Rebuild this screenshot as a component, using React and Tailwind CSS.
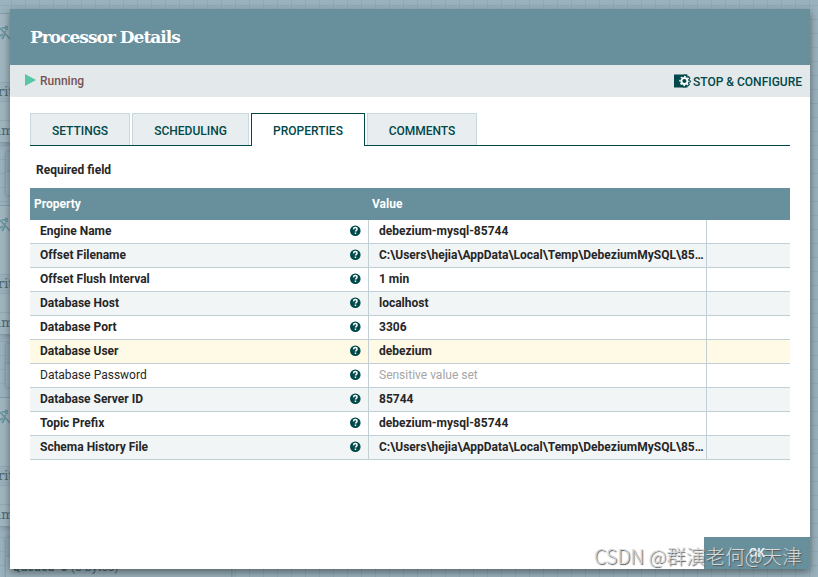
import { clsx } from "clsx";

const tabs = [
  { label: "SETTINGS", width: "w-[100px]" },
  { label: "SCHEDULING", width: "w-[117px]" },
  { label: "PROPERTIES", width: "w-[114px]", active: true },
  { label: "COMMENTS", width: "w-[110px]" },
];

const properties = [
  { name: "Engine Name", value: "debezium-mysql-85744", required: true },
  {
    name: "Offset Filename",
    value: "C:\\Users\\hejia\\AppData\\Local\\Temp\\DebeziumMySQL\\85…",
    required: true,
  },
  { name: "Offset Flush Interval", value: "1 min", required: true },
  { name: "Database Host", value: "localhost", required: true },
  { name: "Database Port", value: "3306", required: true },
  { name: "Database User", value: "debezium", required: true, hovered: true },
  { name: "Database Password", value: "Sensitive value set", sensitive: true },
  { name: "Database Server ID", value: "85744", required: true },
  { name: "Topic Prefix", value: "debezium-mysql-85744", required: true },
  {
    name: "Schema History File",
    value: "C:\\Users\\hejia\\AppData\\Local\\Temp\\DebeziumMySQL\\85…",
    required: true,
  },
];

const HelpIcon = () => (
  <svg viewBox="0 0 11 11" className="mb-[2px] h-[11px] w-[11px] shrink-0">
    <circle cx="5.3" cy="5.7" r="5.3" fill="#004849" />
    <path
      d="M3.5 4.4C3.6 3.1 4.3 2.6 5.3 2.6c1.1 0 1.8.6 1.8 1.5 0 1.2-1.6 1.2-1.6 2.5"
      fill="none"
      stroke="#fff"
      strokeWidth="1.5"
    />
    <rect x="4.7" y="7.5" width="1.5" height="1.5" fill="#fff" />
  </svg>
);

const StopConfigureIcon = () => (
  <svg viewBox="0 0 17 14" className="mb-px h-[14px] w-[17px]">
    <path d="M0 .5h13.5v13H0z" fill="#004849" />
    <circle cx="10.4" cy="7" r="5.6" fill="#004849" />
    <circle
      cx="10.4"
      cy="7"
      r="6"
      fill="none"
      stroke="#004849"
      strokeWidth="1.2"
      strokeDasharray="2.9 1.812"
      strokeDashoffset="1.45"
    />
    <circle cx="10.4" cy="7" r="3" fill="none" stroke="#fff" strokeWidth="1.9" />
    <circle
      cx="10.4"
      cy="7"
      r="4.5"
      fill="none"
      stroke="#fff"
      strokeWidth="1.4"
      strokeDasharray="1.7 1.834"
      strokeDashoffset="0.85"
    />
  </svg>
);

const CanvasProcessor = ({ className }) => (
  <div
    className={clsx(
      "absolute left-0 h-[130px] w-[240px] border-y border-[#829da8] bg-[#a0b6bf] text-[13px] text-[#4f686f] shadow-md",
      className
    )}
  >
    <svg viewBox="0 0 12 16" className="mt-[11px] h-4 w-3">
      <path
        d="M0 3l10 11"
        fill="none"
        stroke="#66909d"
        strokeWidth="1.4"
      />
      <path
        d="M2 3l4-.5M5 4l3 .5M5 9L2 14M6 6l-2 2M3 9L0 11"
        fill="none"
        stroke="#66909d"
        strokeWidth="1.6"
      />
      <circle cx="6.5" cy="2" r="1.4" fill="#66909d" />
    </svg>
    <div className="mt-[41px] flex h-[20px] items-center border-y border-[#91aab5] bg-[#9ab1bb] font-['DejaVu_Serif']">
      <span className="-ml-[2px]">rit</span>
    </div>
    <div className="mt-[18px] flex h-[21px] items-center border-t border-[#91aab5] font-['DejaVu_Serif']">
      <span className="-ml-[3px]">im</span>
    </div>
  </div>
);

const CanvasConnection = ({ className, children }) => (
  <div
    className={clsx(
      "absolute left-[6px] h-[43px] w-[225px] bg-[#9ab1bb] shadow-[0_0_3px_#67838f]",
      className
    )}
  >
    <div className="h-[20px] border-b border-[#879fa9] bg-[#92abb6]" />
    {children}
  </div>
);

const FlowCanvas = () => (
  <div className="absolute inset-0 bg-[#9ab2bd] bg-[linear-gradient(to_right,#90a9b5_1px,transparent_1px),linear-gradient(to_bottom,#90a9b5_1px,transparent_1px)] bg-[size:14px_14px] bg-[position:11px_5px]">
    <CanvasProcessor className="top-[13px]" />
    <CanvasConnection className="top-[152px]" />
    <CanvasProcessor className="top-[205px]" />
    <CanvasConnection className="top-[344px]" />
    <CanvasProcessor className="top-[397px]" />
    <CanvasConnection className="top-[537px]">
      <div className="mt-[3px] pl-[6px] text-[12.3px] leading-[15px] text-[#4f6870]">
        <b>Queued</b> &nbsp;<b>0</b> (0 bytes)
      </div>
    </CanvasConnection>
  </div>
);

const Tabs = () => (
  <div className="flex h-[33px] gap-[2px] border-b border-[#004849]">
    {tabs.map((tab) => (
      <button
        key={tab.label}
        type="button"
        className={clsx(
          "border border-b-0 pt-[2px] text-[12px] font-medium text-[#004849]",
          tab.width,
          tab.active
            ? "h-[33px] border-[#004849] bg-white"
            : "h-[32px] border-[#c7d9dc] bg-[#e8edef]"
        )}
      >
        {tab.label}
      </button>
    ))}
  </div>
);

const PropertyRow = ({ property, odd }) => (
  <div
    className={clsx(
      "flex h-6 border-b border-[#c2d0d6] text-[12px] leading-[23px] text-[#262626]",
      property.hovered ? "bg-[#fffae6]" : odd ? "bg-[#f2f5f6]" : "bg-white",
      property.required && "font-bold"
    )}
  >
    <div className="flex w-[339px] items-center justify-between border-r border-[#c2d0d6] pr-[7px] pl-[10px]">
      <span>{property.name}</span>
      <HelpIcon />
    </div>
    <div
      className={clsx(
        "w-[338px] truncate border-r border-[#c2d0d6] pl-[10px]",
        property.sensitive && "text-[#a5a5a5]"
      )}
    >
      {property.value}
    </div>
  </div>
);

const ProcessorDetails = () => (
  <div className="relative flex h-[560px] w-[800px] flex-col bg-white shadow-[0_3px_8px_rgba(0,0,0,0.45)]">
    <header className="flex h-14 shrink-0 items-center bg-[#688f9c] pt-[2px] pl-5">
      <h1 className="font-['Roboto_Slab','DejaVu_Serif',serif] text-[17px] font-bold tracking-[-0.98px] whitespace-nowrap text-white">
        Processor Details
      </h1>
    </header>
    <div className="flex h-8 shrink-0 items-center justify-between bg-[#e3e8eb] pr-2 pl-[15px]">
      <div className="flex items-center gap-1">
        <svg viewBox="0 0 11 12" className="mb-[2px] h-3 w-[11px]">
          <path d="M0 0l11 6L0 12z" fill="#56c7a2" />
        </svg>
        <span className="text-[12px] font-medium text-[#775351]">Running</span>
      </div>
      <button type="button" className="flex items-center gap-[2px] text-[12px] font-medium text-[#004849]">
        <StopConfigureIcon />
        <span className="pt-[2px]">STOP &amp; CONFIGURE</span>
      </button>
    </div>
    <main className="flex-1 px-5 pt-4">
      <Tabs />
      <p className="mt-4 mb-[10px] pl-[6px] text-[12px] leading-4 font-bold text-[#262626]">
        Required field
      </p>
      <div className="flex h-8 items-center bg-[#688f9c] text-[12px] font-bold text-white">
        <span className="w-[338px] pl-1">Property</span>
        <span className="pl-1">Value</span>
      </div>
      {properties.map((property, i) => (
        <PropertyRow key={property.name} property={property} odd={i % 2 === 1} />
      ))}
    </main>
    <footer className="flex h-8 justify-end">
      <button type="button" className="w-[106px] bg-[#688f9c] text-[12px] font-medium text-white">
        OK
      </button>
    </footer>
  </div>
);

const App = () => (
  <div className="relative h-[577px] w-[818px] overflow-hidden font-['Roboto',sans-serif]">
    <FlowCanvas />
    <div className="px-[10px] pt-[9px]">
      <ProcessorDetails />
    </div>
    <div className="absolute top-[542px] left-[594px] font-['Noto_Sans_CJK_SC',sans-serif] text-[19.6px] leading-[28px] font-light whitespace-nowrap text-[#d5d9db] [text-shadow:1px_1px_1px_#555]">
      CSDN @群演老何@天津
    </div>
  </div>
);

export default App;
